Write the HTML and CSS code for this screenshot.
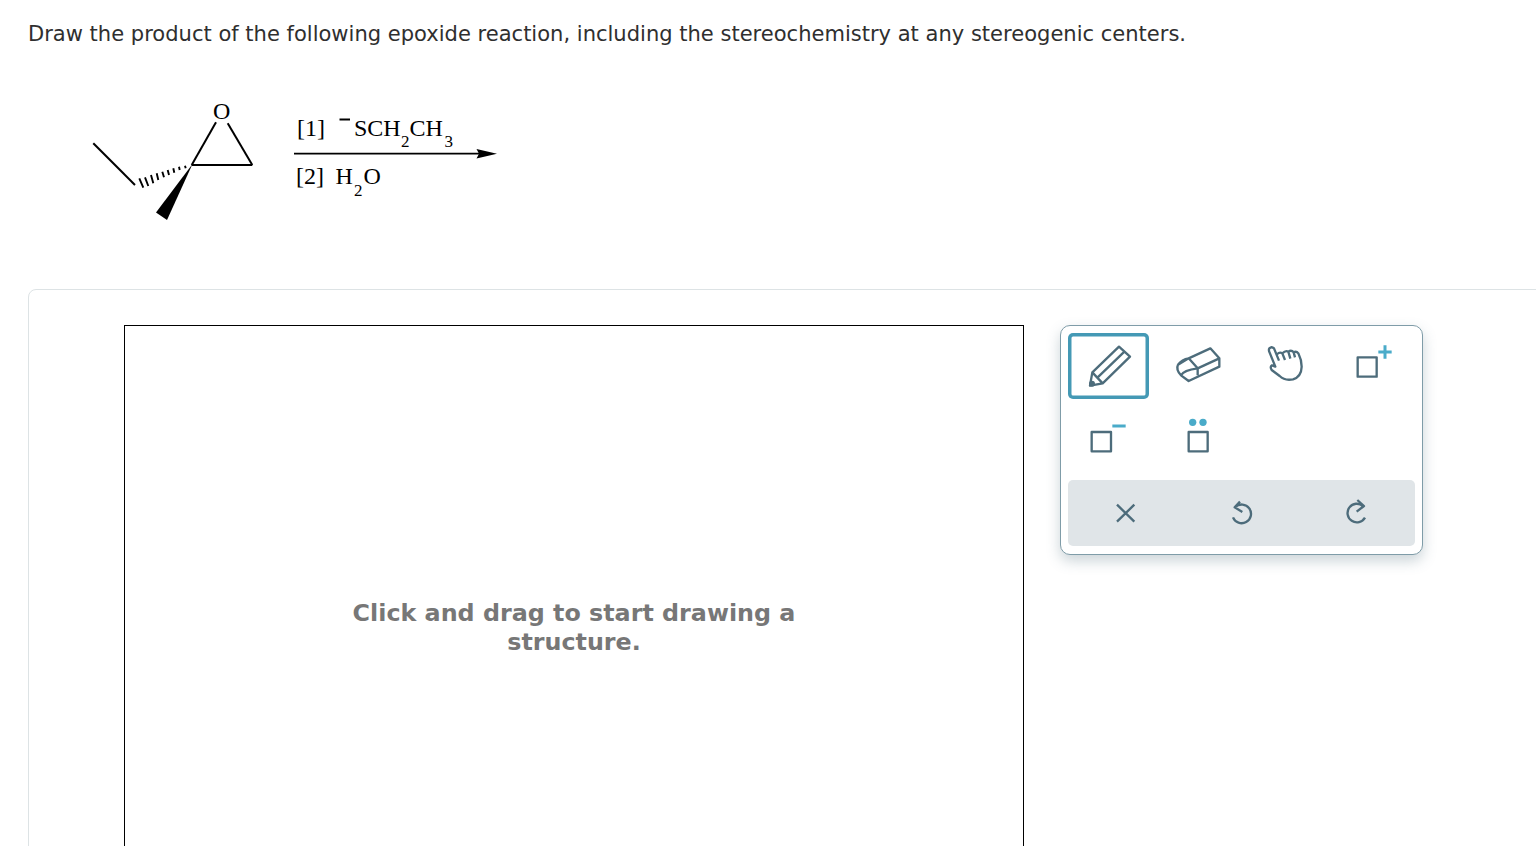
FILE: index.html
```html
<!DOCTYPE html>
<html lang="en">
<head>
<meta charset="utf-8">
<title>Epoxide reaction</title>
<link rel="stylesheet" href="styles.css">
</head>
<body>
<main class="page">
  <p class="question">Draw the product of the following epoxide reaction, including the stereochemistry at any stereogenic centers.</p>
  <svg class="reaction" viewBox="0 0 430 140" width="430" height="140" role="img" aria-label="Epoxide reaction scheme">
    <g class="bond">
      <path d="M13.3 53.3L55 95"/>
      <path d="M111.7 75L136 32.3"/>
      <path d="M147.7 33.3L172.3 75"/>
      <path d="M111.7 75H172.3"/>
    </g>
    <g class="hash">
      <path d="M59.3 88.3L63.3 97.7M65 87.3L68.3 96M71 85L73.3 93.3M76.7 83.3L78.3 90M82.3 81.7L84 87.3M87.7 80L89 85M93.3 78.3L94.3 82.7M99 76.7L99.7 80M105 75.7L105.7 78.3"/>
    </g>
    <path class="solid" d="M112.5 74L76 122.5L87 130Z"/>
    <text class="chem" x="133" y="29">O</text>
    <text class="chem" x="217" y="46">[1]</text>
    <path class="bond" d="M259.5 29.5H270"/>
    <text class="chem" x="274" y="46">SCH</text>
    <text class="chem sub" x="321" y="57">2</text>
    <text class="chem" x="329.5" y="46">CH</text>
    <text class="chem sub" x="364.5" y="57">3</text>
    <path class="bond arrow-line" d="M214 63.7H400"/>
    <path class="solid" d="M396.5 59L417 63.7L396.5 68.5L399 63.7Z"/>
    <text class="chem" x="216" y="94">[2]</text>
    <text class="chem" x="255.5" y="94">H</text>
    <text class="chem sub" x="274" y="106">2</text>
    <text class="chem" x="283.5" y="94">O</text>
  </svg>

  <section class="panel">
    <div class="canvas">
      <p class="hint">Click and drag to start drawing a structure.</p>
    </div>
    <aside class="toolbar">
      <div class="tools">
        <button class="tool selected" aria-label="Draw">
          <svg class="icon" viewBox="54 39 243 198">
            <path class="line" d="M127 157L207 80L240 110L158 190L120 197ZM127 157L158 190M143 172L224 94"/>
            <circle class="ink" cx="126" cy="191" r="9"/>
          </svg>
        </button>
        <button class="tool" aria-label="Erase">
          <svg class="icon" viewBox="320 39 243 198">
            <path class="line" d="M415 115L480 85L507 115V140L415 183L392 166Q376 148 383 134ZM415 115L442 145L507 115M442 145V166M383 134Q395 118 415 115M392 166Q400 150 442 145"/>
          </svg>
        </button>
        <button class="tool" aria-label="Move">
          <svg class="icon" viewBox="16 39 243 198">
            <path class="line" d="M118 122L103 85Q96 78 89 85Q86 90 90 98L107 140L97 136Q90 140 96 150L120 168Q135 183 160 178Q185 170 186 140Q186 120 176 100Q170 92 162 97L166 112M162 97Q155 88 146 95L152 116M146 95Q138 90 128 100L136 120M128 100Q120 95 113 102"/>
          </svg>
        </button>
        <button class="tool" aria-label="Add positive charge">
          <svg class="icon" viewBox="282 39 243 198">
            <rect class="line" x="353" y="112" width="57" height="58"/>
            <path class="accent" d="M415 96H455M435 76V116"/>
          </svg>
        </button>
        <button class="tool" aria-label="Add negative charge">
          <svg class="icon" viewBox="54 260 243 198">
            <rect class="line" x="125" y="335" width="58" height="58"/>
            <path class="accent" d="M187 317H227"/>
          </svg>
        </button>
        <button class="tool" aria-label="Add lone pair">
          <svg class="icon" viewBox="320 260 243 198">
            <rect class="line" x="415" y="335" width="57" height="58"/>
            <circle class="dot" cx="427" cy="306" r="11"/>
            <circle class="dot" cx="458" cy="306" r="11"/>
          </svg>
        </button>
      </div>
      <div class="actions">
        <button class="action" aria-label="Clear">
          <svg class="icon" viewBox="54 30 347 198">
            <path class="line" d="M201 104L253 155M253 104L201 155"/>
          </svg>
        </button>
        <button class="action" aria-label="Undo">
          <svg class="icon" viewBox="401 30 347 198">
            <path class="line" d="M569 95L553 112L576 126M555 111A28 28 0 1 1 548 142"/>
          </svg>
        </button>
        <button class="action" aria-label="Redo">
          <svg class="icon" viewBox="748 30 347 198">
            <path class="line" d="M923 90L943 108L921 125M940 108A28 28 0 1 0 946 143"/>
          </svg>
        </button>
      </div>
    </aside>
  </section>
</main>
</body>
</html>
```
FILE: styles.css
```css
html, body {
  margin: 0;
  height: 846px;
  overflow: hidden;
  background: #fff;
}
.page {
  height: 846px;
  overflow: hidden;
  padding: 0 0 0 28px;
  font-family: "DejaVu Sans", Verdana, sans-serif;
  color: #333;
}
.question {
  margin: 0;
  padding-top: 21px;
  font-size: 21.04px;
  line-height: 26px;
  color: #2f2f2f;
}
.reaction {
  display: block;
  margin: 43px 0 0 52px;
}
.bond {
  fill: none;
  stroke: #000;
  stroke-width: 2;
}
.arrow-line { stroke-width: 1.7; }
.hash {
  fill: none;
  stroke: #000;
  stroke-width: 1.9;
}
.solid { fill: #000; }
.chem {
  font-family: "Liberation Serif", "Times New Roman", serif;
  font-size: 24px;
  fill: #000;
}
.sub { font-size: 17px; }
.panel {
  display: flex;
  align-items: flex-start;
  gap: 36px;
  width: 1600px;
  height: 700px;
  margin-top: 59px;
  padding: 35px 95px;
  box-sizing: border-box;
  border: 1px solid #dde3e5;
  border-radius: 8px;
}
.canvas {
  flex: none;
  display: flex;
  align-items: center;
  justify-content: center;
  box-sizing: border-box;
  width: 900px;
  height: 605px;
  border: 1px solid #000;
}
.hint {
  margin: 0;
  width: 480px;
  text-align: center;
  font-size: 23.8px;
  line-height: 29px;
  font-weight: 700;
  color: #777;
}
.toolbar {
  flex: none;
  box-sizing: border-box;
  width: 363px;
  height: 230px;
  padding: 7px;
  border: 1px solid #7f9ca8;
  border-radius: 10px;
  background: #fff;
  box-shadow: 0 6px 14px rgba(70, 100, 115, 0.28);
}
.tools {
  display: grid;
  grid-template-columns: repeat(4, 81px);
  grid-auto-rows: 66px;
  column-gap: 7.67px;
  row-gap: 7.67px;
}
.tool, .action {
  padding: 0;
  border: 0;
  background: transparent;
  display: block;
}
.tool.selected {
  border-radius: 5px;
  box-shadow: inset 0 0 0 3.5px #4499b5;
}
.icon {
  display: block;
  width: 100%;
  height: 100%;
}
.line {
  fill: none;
  stroke: #4d6c7b;
  stroke-width: 7;
  stroke-linejoin: round;
}
.ink { fill: #4d6c7b; }
.accent {
  fill: none;
  stroke: #4aabc9;
  stroke-width: 9;
}
.dot { fill: #4aabc9; }
.actions {
  display: grid;
  grid-template-columns: repeat(3, 1fr);
  height: 66px;
  margin-top: 7.33px;
  border-radius: 5px;
  background: #e0e5e8;
}
```
